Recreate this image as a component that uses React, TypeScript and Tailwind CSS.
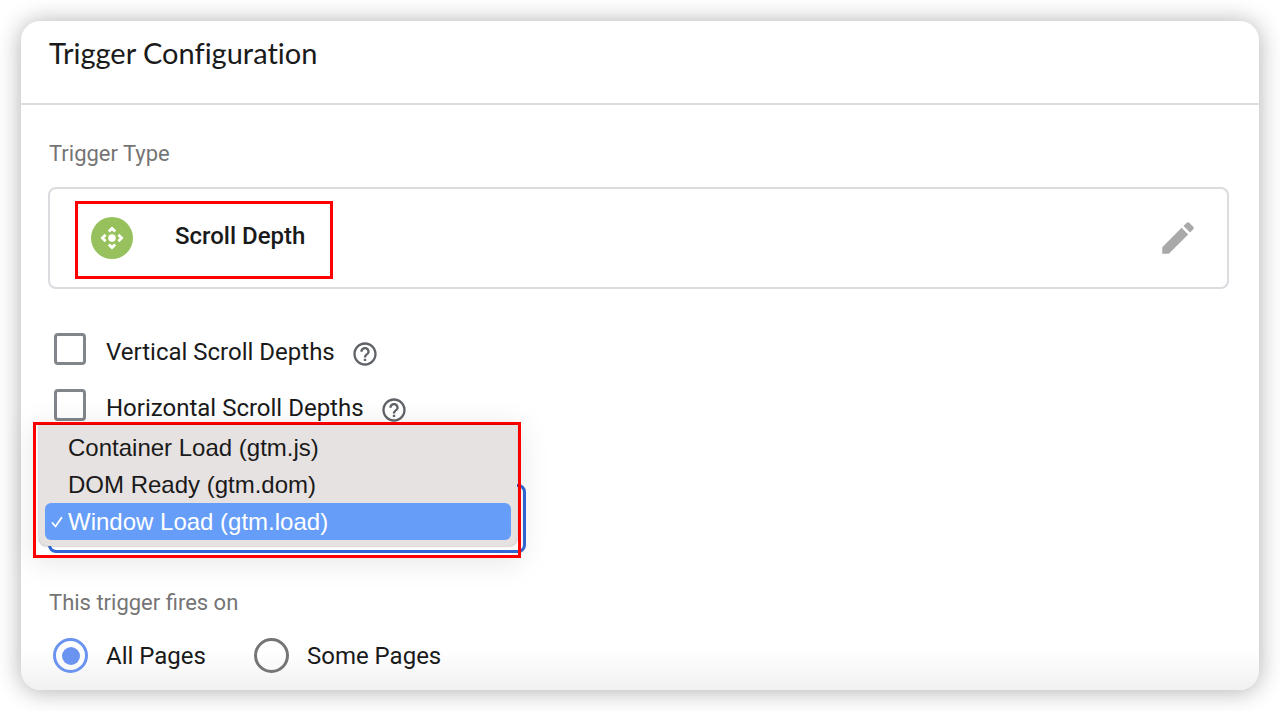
import { useState } from 'react';

const loadEvents = [
    { value: 'gtm.js', name: 'Container Load (gtm.js)' },
    { value: 'gtm.dom', name: 'DOM Ready (gtm.dom)' },
    { value: 'gtm.load', name: 'Window Load (gtm.load)' },
];

function HelpIcon() {
    return (
        <svg className="w-7 h-7" viewBox="0 0 24 24" fill="currentColor">
            <path d="M11 18h2v-2h-2v2zm1-16C6.48 2 2 6.48 2 12s4.48 10 10 10 10-4.48 10-10S17.52 2 12 2zm0 18c-4.41 0-8-3.59-8-8s3.59-8 8-8 8 3.59 8 8-3.59 8-8 8zm0-14c-2.21 0-4 1.79-4 4h2c0-1.1.9-2 2-2s2 .9 2 2c0 2-3 1.75-3 5h2c0-2.25 3-2.5 3-5 0-2.21-1.79-4-4-4z" />
        </svg>
    );
}

function ScrollDepthIcon() {
    return (
        <svg className="w-[42px] h-[42px]" viewBox="0 0 42 42">
            <circle cx="21" cy="21" r="21" fill="#97c15c" />
            <circle cx="21" cy="21" r="3.8" fill="#fff" />
            <g fill="none" stroke="#fff" strokeWidth="2.8">
                <path d="M17.8 14.6 21 11.4l3.2 3.2" />
                <path d="M17.8 27.4 21 30.6l3.2-3.2" />
                <path d="M14.6 17.8 11.4 21l3.2 3.2" />
                <path d="M27.4 17.8 30.6 21l-3.2 3.2" />
            </g>
        </svg>
    );
}

function DepthOption({ id, label }: { id: string; label: string }) {
    return (
        <div className="flex items-center h-14 pl-1.5">
            <input
                id={id}
                type="checkbox"
                className="appearance-none w-8 h-8 mb-1 border-3 border-[#80868b] rounded-[4px] bg-white checked:bg-[#5e8ff0]"
            />
            <label htmlFor={id} className="ml-5 pt-0.5 text-2xl">{label}</label>
            <button type="button" aria-label={`About ${label}`} className="ml-4 mt-1.5 text-[#5f6368]">
                <HelpIcon />
            </button>
        </div>
    );
}

function PageOption({ value, label, selected, onSelect }: { value: string; label: string; selected: string; onSelect: (value: string) => void }) {
    return (
        <label className="flex items-center gap-[18px] text-2xl">
            <input
                type="radio"
                name="fires-on"
                value={value}
                checked={selected === value}
                onChange={() => onSelect(value)}
                className="appearance-none grid place-items-center w-[35px] h-[35px] rounded-full border-3 border-[#757575] checked:border-[#6a94f0] before:w-[18px] before:h-[18px] before:rounded-full checked:before:bg-[#6a94f0]"
            />
            {label}
        </label>
    );
}

export default function App() {
    const [loadEvent, setLoadEvent] = useState('gtm.load');
    const [firesOn, setFiresOn] = useState('all');

    return (
        <div className="p-[21px] bg-white font-['Roboto',sans-serif] text-[#1a1a1a]">
            <main className="rounded-[20px] bg-linear-to-t from-[#f1f1f1] to-white to-[40px] shadow-[0_1px_24px_rgba(0,0,0,0.32)]">
                <header className="h-[84px] pl-7 pt-3 border-b-2 border-[#dadce0]">
                    <h1 className="font-['Lato',sans-serif] [font-variant-ligatures:none] text-[29px] leading-10">Trigger Configuration</h1>
                </header>

                <div className="pl-[27px] pr-[30px] pt-[35px] pb-[17px]">
                    <h2 className="pl-px text-[22px] leading-7 text-[#757575]">Trigger Type</h2>

                    <section className="flex items-center justify-between mt-[19px] h-[102px] pl-[41px] pr-7 border-2 border-[#dadce0] rounded-lg">
                        <div className="relative flex items-center gap-[42px]">
                            <ScrollDepthIcon />
                            <span className="pb-1 text-2xl font-medium">Scroll Depth</span>
                            {/* Highlight */}
                            <div className="absolute -left-4 -right-7 -top-4 -bottom-5 border-3 border-[#ff0000]"></div>
                        </div>
                        <button type="button" aria-label="Edit trigger type" className="text-[#a9a9a9]">
                            <svg className="w-[42px] h-[42px]" viewBox="0 0 24 24" fill="currentColor">
                                <path d="M3 17.25V21h3.75L17.81 9.94l-3.75-3.75L3 17.25zM20.71 7.04c.39-.39.39-1.02 0-1.41l-2.34-2.34c-.39-.39-1.02-.39-1.41 0l-1.83 1.83 3.75 3.75 1.83-1.83z" />
                            </svg>
                        </button>
                    </section>

                    <div className="mt-[34px]">
                        <DepthOption id="vertical" label="Vertical Scroll Depths" />
                        <DepthOption id="horizontal" label="Horizontal Scroll Depths" />
                    </div>

                    <div className="relative w-[478px] mt-[49px]">
                        <select
                            aria-label="Enable this trigger on"
                            value={loadEvent}
                            onChange={(e) => setLoadEvent(e.target.value)}
                            className="block appearance-none w-full h-[69px] px-5 text-2xl border-3 border-[#3367d6] rounded-lg bg-white"
                        >
                            {loadEvents.map((item) => (
                                <option key={item.value} value={item.value}>{item.name}</option>
                            ))}
                        </select>

                        {/* Open menu */}
                        <div className="absolute -left-[15px] -top-[62px] w-[488px] h-[136px] pl-[3px] pr-px border-3 border-[#ff0000] shadow-[0_4px_28px_rgba(0,0,0,0.1)]">
                            <ul
                                role="listbox"
                                aria-label="Load events"
                                className="px-1.5 pt-1 pb-1.5 rounded-b-lg bg-[#e6e2e1] font-['Liberation_Sans',sans-serif] text-2xl shadow-[0_0_2px_rgba(0,0,0,0.5)]"
                            >
                                {loadEvents.map((item) => {
                                    const active = item.value === loadEvent;
                                    return (
                                        <li key={item.value} role="option" aria-selected={active}>
                                            <button
                                                type="button"
                                                onClick={() => setLoadEvent(item.value)}
                                                className={`flex items-center w-full h-[37px] pl-1.5 rounded-md ${active ? 'bg-[#669df8] text-white' : ''}`}
                                            >
                                                <span className="w-[17px]">
                                                    {active && (
                                                        <svg className="w-3 h-3" viewBox="0 0 12 12" fill="none" stroke="currentColor" strokeWidth="1.8" strokeLinecap="round" strokeLinejoin="round">
                                                            <path d="M1.5 7 4.5 10.5 10.5 1.8" />
                                                        </svg>
                                                    )}
                                                </span>
                                                {item.name}
                                            </button>
                                        </li>
                                    );
                                })}
                            </ul>
                        </div>
                    </div>

                    <fieldset className="mt-9">
                        <legend className="pl-px text-[22px] leading-7 text-[#757575]">This trigger fires on</legend>
                        <div className="flex flex-wrap gap-12 mt-[21px] pl-[5px]">
                            <PageOption value="all" label="All Pages" selected={firesOn} onSelect={setFiresOn} />
                            <PageOption value="some" label="Some Pages" selected={firesOn} onSelect={setFiresOn} />
                        </div>
                    </fieldset>
                </div>
            </main>
        </div>
    );
}
